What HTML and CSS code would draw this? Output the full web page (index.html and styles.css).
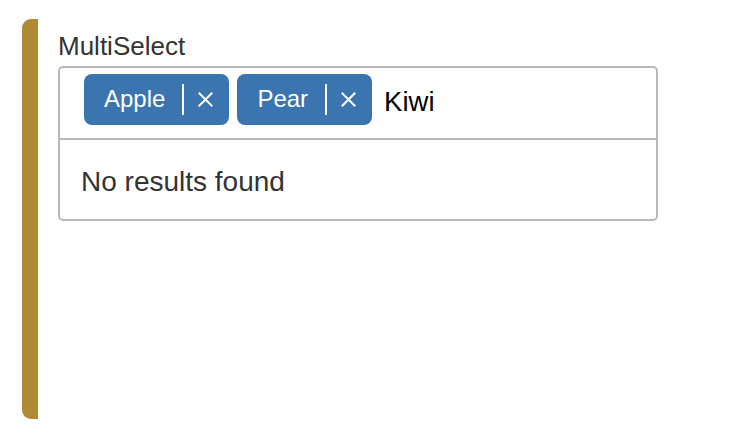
FILE: index.html
```html
<!DOCTYPE html>
<html>
<head>
<meta charset="utf-8">
<link rel="stylesheet" href="styles.css">
</head>
<body>
<div class="frame">
  <div class="label">MultiSelect</div>
  <div class="ms">
    <div class="ms-control">
      <span class="chip"><span class="chip-text">Apple</span><span class="chip-sep"></span><svg class="chip-x" viewBox="0 0 15 15"><path d="M1.5 1.5L13.5 13.5M13.5 1.5L1.5 13.5" stroke="#fff" stroke-width="2" stroke-linecap="square"/></svg></span>
      <span class="chip"><span class="chip-text">Pear</span><span class="chip-sep"></span><svg class="chip-x" viewBox="0 0 15 15"><path d="M1.5 1.5L13.5 13.5M13.5 1.5L1.5 13.5" stroke="#fff" stroke-width="2" stroke-linecap="square"/></svg></span>
      <span class="query">Kiwi</span>
    </div>
    <div class="ms-menu">No results found</div>
  </div>
</div>
</body>
</html>
```

FILE: styles.css
```css
html, body {
  margin: 0;
  padding: 0;
  background: #fff;
  font-family: "Liberation Sans", Arial, Helvetica, sans-serif;
}
.frame {
  margin: 19px 0 0 22px;
  height: 400px;
  box-sizing: border-box;
  border-left: 16px solid #b08a34;
  border-radius: 9px 0 0 9px;
  padding: 12px 0 0 20px;
}
.label {
  font-size: 26px;
  line-height: 30px;
  color: #333;
  margin-bottom: 5px;
}
.ms {
  width: 600px;
  box-sizing: border-box;
  border: 2px solid #b8b8b8;
  border-radius: 5px;
}
.ms-control {
  height: 70px;
  box-sizing: border-box;
  padding: 6px 0 0 24px;
  display: flex;
  align-items: flex-start;
  gap: 8px;
}
.chip {
  display: flex;
  align-items: center;
  height: 51px;
  background: #3a75b0;
  border-radius: 8px;
  color: #fff;
  font-size: 24px;
  padding: 0 16px 0 20px;
}
.chip-text {
  line-height: 28px;
  margin-top: -2px;
}
.chip-sep {
  width: 2px;
  height: 31px;
  background: #fff;
  margin: 0 14px 0 17px;
}
.chip-x {
  width: 15px;
  height: 15px;
  display: block;
}
.query {
  font-size: 27.5px;
  line-height: 51px;
  color: #000;
  margin-left: 4px;
  padding-top: 2px;
}
.ms-menu {
  border-top: 2px solid #b8b8b8;
  height: 81px;
  box-sizing: border-box;
  padding: 5px 0 0 21px;
  display: flex;
  align-items: center;
  font-size: 28px;
  color: #333;
}
```
